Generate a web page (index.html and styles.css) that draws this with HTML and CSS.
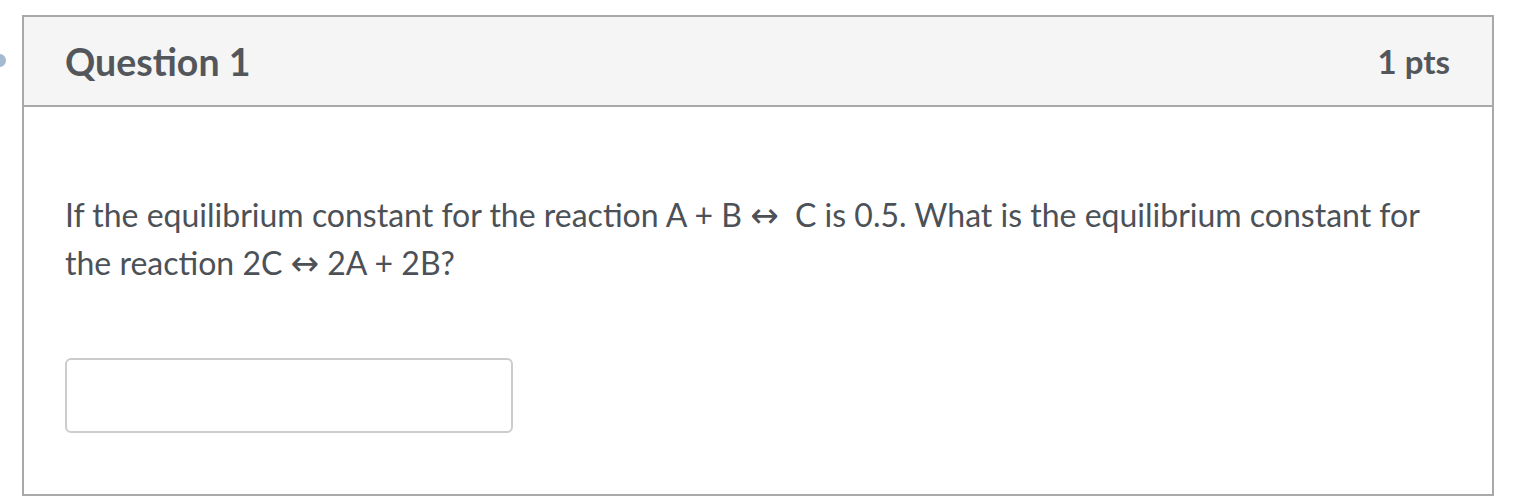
FILE: index.html
```html
<!DOCTYPE html>
<html>
<head>
<meta charset="utf-8">
<link rel="stylesheet" href="styles.css">
</head>
<body>
<div class="page">
  <span class="flag" aria-hidden="true"></span>
  <div class="question">
    <div class="q-header">
      <span class="q-title">Question 1</span>
      <span class="q-points">1 pts</span>
    </div>
    <div class="q-body">
      <p class="q-text">If the equilibrium constant for the reaction A + B <span class="arrow">↔</span>&nbsp; C is 0.5. What is the equilibrium constant for the reaction 2C <span class="arrow">↔</span> 2A + 2B?</p>
      <input class="q-input" type="text">
    </div>
  </div>
</div>
</body>
</html>
```

FILE: styles.css
```css
html, body {
  margin: 0;
  padding: 0;
  background: #ffffff;
}
.page {
  position: relative;
  padding: 15px 0 0 22px;
  font-family: Lato, "Open Sans", sans-serif;
}
.flag {
  position: absolute;
  left: -6px;
  top: 54px;
  width: 12px;
  height: 13px;
  border-radius: 50%;
  background: #8fa9c4;
  opacity: 0.8;
}
.question {
  width: 1472px;
  box-sizing: border-box;
  border: 2px solid #a9a9a9;
}
.q-header {
  height: 88px;
  background: #f5f5f5;
  border-bottom: 2px solid #a9a9a9;
  display: flex;
  align-items: center;
  justify-content: space-between;
  padding: 0 42px 0 41px;
  color: #53575b;
  font-weight: 700;
}
.q-title {
  font-size: 37.5px;
}
.q-points {
  font-size: 33px;
}
.q-body {
  padding: 84px 41px 61px 41px;
}
.q-text {
  margin: 0;
  height: 96px;
  font-size: 32px;
  line-height: 48px;
  color: #4c5157;
}
.arrow {
  font-family: "DejaVu Sans", sans-serif;
  font-size: 34px;
  line-height: 1;
}
.q-input {
  display: block;
  margin-top: 71px;
  width: 448px;
  height: 75px;
  box-sizing: border-box;
  border: 2px solid #cccccc;
  border-radius: 6px;
  background: #fff;
}
```
